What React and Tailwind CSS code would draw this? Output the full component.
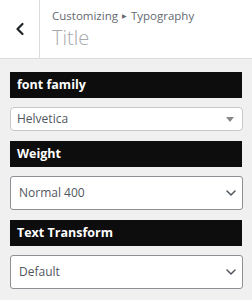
export default function App() {
  const font = { fontFamily: '"Open Sans", "Noto Sans", sans-serif' };

  return (
    <div className="w-[252px] h-[300px] bg-[#f0f0f1] overflow-hidden" style={font}>
      {/* Header */}
      <div className="flex h-[59px] bg-white border-b border-[#dcdcde]">
        <button className="w-[40px] flex items-center justify-center border-r border-[#dcdcde] text-[#1d2327]">
          <svg width="10" height="14" viewBox="0 0 10 14" fill="none">
            <path d="M7.5 2 L2.5 7 L7.5 12" stroke="currentColor" strokeWidth="2.2" strokeLinecap="round" strokeLinejoin="round" />
          </svg>
        </button>
        <div className="flex flex-col pl-[12px] pt-[7px]">
          <span className="flex items-center text-[11.5px] leading-[18px] text-[#646970]">
            Customizing
            <span className="text-[6px] mx-[4px]">▶</span>
            Typography
          </span>
          <span className="text-[20px] leading-[26px] font-light text-[#a7aaad]">Title</span>
        </div>
      </div>

      {/* Controls */}
      <div className="flex flex-col px-[10px] pt-[13px]">
        <div className="h-[26px] bg-[#0d0d0d] text-white font-bold text-[12.5px] flex items-center px-[7px]">
          font family
        </div>
        <div className="mt-[9px] h-[24px] w-[233px] bg-white border border-[#c8c8c8] rounded-[4px] flex items-center justify-between px-[6px] text-[12px] text-[#50575e]">
          <span>Helvetica</span>
          <svg width="8" height="5" viewBox="0 0 8 5" className="mr-[2px]">
            <path d="M0 0 H8 L4 5 Z" fill="#888" />
          </svg>
        </div>

        <div className="mt-[10px] h-[26px] bg-[#0d0d0d] text-white font-bold text-[12.5px] flex items-center px-[7px]">
          Weight
        </div>
        <div className="mt-[9px] h-[34px] w-[233px] bg-white border border-[#8c8f94] rounded-[3px] flex items-center justify-between pl-[8px] pr-[6px] text-[12px] text-[#50575e]">
          <span>Normal 400</span>
          <svg width="10" height="6" viewBox="0 0 10 6" fill="none">
            <path d="M1 1 L5 5 L9 1" stroke="#50575e" strokeWidth="1.5" strokeLinecap="round" strokeLinejoin="round" />
          </svg>
        </div>

        <div className="mt-[10px] h-[26px] bg-[#0d0d0d] text-white font-bold text-[12.5px] flex items-center px-[7px]">
          Text Transform
        </div>
        <div className="mt-[9px] h-[34px] w-[233px] bg-white border border-[#8c8f94] rounded-[3px] flex items-center justify-between pl-[8px] pr-[6px] text-[12px] text-[#50575e]">
          <span>Default</span>
          <svg width="10" height="6" viewBox="0 0 10 6" fill="none">
            <path d="M1 1 L5 5 L9 1" stroke="#50575e" strokeWidth="1.5" strokeLinecap="round" strokeLinejoin="round" />
          </svg>
        </div>
      </div>
    </div>
  );
}
